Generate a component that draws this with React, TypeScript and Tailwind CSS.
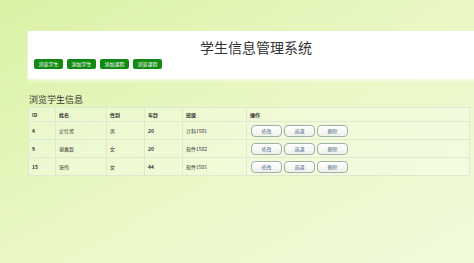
const navButtons = ['浏览学生', '添加学生', '添加课程', '浏览课程'];

const students = [
  { id: 4, name: '企仕皆', gender: '男', age: 20, cls: '计科1501' },
  { id: 9, name: '谢嘉磊', gender: '女', age: 20, cls: '软件1502' },
  { id: 15, name: '张伟', gender: '女', age: 44, cls: '软件1501' },
];

function OpButton({ label }: { label: string }) {
  return (
    <button className="flex h-[12px] w-[31px] items-center justify-center rounded-[4px] border border-[#9fb0a8] bg-gradient-to-b from-white to-[#eef2ea] text-[5px] text-[#4d6c8c]">
      {label}
    </button>
  );
}

export default function App() {
  return (
    <div
      className="h-[263px] w-[474px] overflow-hidden bg-gradient-to-br from-[#d8f2a6] via-[#eaf8c4] to-[#f2fadc] pt-[31px] pl-[28px]"
      style={{ fontFamily: '"Noto Sans CJK SC", "Noto Sans", sans-serif' }}
    >
      <div className="h-[48px] w-[456px] bg-white pt-[7px] pl-[6px] shadow-[0_2px_3px_rgba(255,255,255,0.6)]">
        <h1 className="pr-[6px] text-center text-[14px] leading-[18px] text-[#333]">学生信息管理系统</h1>
        <div className="mt-[3px] flex gap-[4px]">
          {navButtons.map((b) => (
            <button
              key={b}
              className="flex h-[10px] w-[29px] items-center justify-center rounded-[2px] bg-[#118a11] text-[5px] text-white"
            >
              {b}
            </button>
          ))}
        </div>
      </div>

      <h2 className="mt-[15px] pl-[1px] text-[9px] leading-[12px] text-[#333]">浏览学生信息</h2>

      <table className="mt-[1px] w-[442px] table-fixed border-collapse bg-white/30 text-[5px] text-[#333]">
        <colgroup>
          <col className="w-[27px]" />
          <col className="w-[51px]" />
          <col className="w-[38px]" />
          <col className="w-[38px]" />
          <col className="w-[64px]" />
          <col />
        </colgroup>
        <thead>
          <tr className="h-[14px]">
            {['ID', '姓名', '性别', '年龄', '班级', '操作'].map((h) => (
              <th key={h} className="border border-[#dfe8d0] pl-[3px] text-left font-bold">
                {h}
              </th>
            ))}
          </tr>
        </thead>
        <tbody>
          {students.map((s) => (
            <tr key={s.id} className="h-[18px]">
              <td className="border border-[#dfe8d0] pl-[3px] font-bold">{s.id}</td>
              <td className="border border-[#dfe8d0] pl-[3px]">{s.name}</td>
              <td className="border border-[#dfe8d0] pl-[3px]">{s.gender}</td>
              <td className="border border-[#dfe8d0] pl-[3px] font-bold">{s.age}</td>
              <td className="border border-[#dfe8d0] pl-[3px]">{s.cls}</td>
              <td className="border border-[#dfe8d0] pl-[4px]">
                <div className="flex gap-[2px]">
                  <OpButton label="修改" />
                  <OpButton label="选课" />
                  <OpButton label="删除" />
                </div>
              </td>
            </tr>
          ))}
        </tbody>
      </table>
    </div>
  );
}
